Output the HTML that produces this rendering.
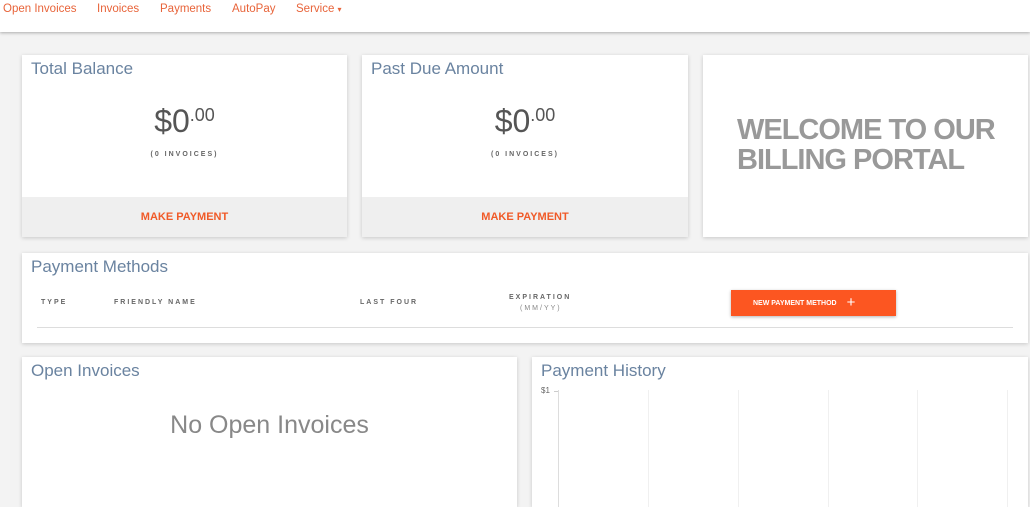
<!DOCTYPE html>
<html><head><style>
*{box-sizing:border-box;margin:0;padding:0}
body{width:1030px;height:497px;overflow:hidden;background:#f3f3f3;font-family:"Liberation Sans",sans-serif;position:relative}
.nav{position:absolute;left:0;top:0;width:1030px;height:32px;background:#fff;box-shadow:0 1px 3px rgba(0,0,0,.3)}
.nav span{position:absolute;top:3px;font-size:11.5px;color:#e8643a}
.card{position:absolute;background:#fff;box-shadow:0 1px 4px rgba(0,0,0,.18);overflow:hidden}
.title{position:absolute;left:9px;top:4px;font-size:17px;color:#6a83a0}
.amt{position:absolute;left:0;right:0;top:48px;text-align:center;font-size:32px;color:#555}
.amt sup{font-size:18px;vertical-align:top;position:relative;top:2px}
.inv{position:absolute;left:0;right:0;top:96px;text-align:center;font-size:7px;letter-spacing:2px;color:#666;font-weight:bold}
.foot{position:absolute;left:0;right:0;bottom:0;height:40px;background:#efefef;text-align:center;line-height:40px;font-size:11px;font-weight:bold;color:#f05a28}
.th{position:absolute;font-size:7px;letter-spacing:2px;color:#666;font-weight:bold}
</style></head><body>
<div class="nav">
<span style="left:3px">Open Invoices</span><span style="left:97px">Invoices</span><span style="left:160px">Payments</span><span style="left:232px">AutoPay</span><span style="left:296px">Service <small style="font-size:8px">▾</small></span>
</div>
<div class="card" style="left:22px;top:55px;width:325px;height:182px">
<div class="title">Total Balance</div>
<div class="amt">$0<sup>.00</sup></div>
<div class="inv">(0 INVOICES)</div>
<div class="foot">MAKE PAYMENT</div></div>
<div class="card" style="left:362px;top:55px;width:326px;height:182px">
<div class="title">Past Due Amount</div>
<div class="amt">$0<sup>.00</sup></div>
<div class="inv">(0 INVOICES)</div>
<div class="foot">MAKE PAYMENT</div></div>
<div class="card" style="left:703px;top:55px;width:325px;height:182px">
<div style="position:absolute;left:34px;top:60px;font-size:29px;font-weight:bold;color:#999;line-height:30px;letter-spacing:-1px">WELCOME TO OUR<br>BILLING PORTAL</div></div>
<div class="card" style="left:22px;top:253px;width:1006px;height:90px">
<div class="title">Payment Methods</div>
<div class="th" style="left:19px;top:46px">TYPE</div>
<div class="th" style="left:92px;top:46px">FRIENDLY NAME</div>
<div class="th" style="left:338px;top:46px">LAST FOUR</div>
<div class="th" style="left:487px;top:41px">EXPIRATION</div>
<div class="th" style="left:498px;top:52px;font-weight:normal;color:#888">(MM/YY)</div>
<div style="position:absolute;left:709px;top:37px;width:165px;height:26px;background:#fc5621;box-shadow:0 1px 3px rgba(0,0,0,.3);color:#fff;font-size:7px;font-weight:bold;line-height:26px;padding-left:22px">NEW PAYMENT METHOD <span style="font-size:15px;font-weight:normal;margin-left:8px;vertical-align:middle">+</span></div>
<div style="position:absolute;left:15px;right:15px;top:74px;height:1px;background:#ddd"></div>
</div>
<div class="card" style="left:22px;top:357px;width:495px;height:150px">
<div class="title">Open Invoices</div>
<div style="position:absolute;left:0;right:0;top:54px;text-align:center;font-size:25px;color:#888">No Open Invoices</div></div>
<div class="card" style="left:532px;top:357px;width:496px;height:150px">
<div class="title">Payment History</div>
<div style="position:absolute;left:9px;top:29px;font-size:8px;color:#666">$1</div>
<div style="position:absolute;left:22px;top:34px;width:4px;height:1px;background:#ccc"></div>
<div style="position:absolute;left:26px;top:33px;width:1px;height:120px;background:#ddd"></div>
<div style="position:absolute;left:116px;top:33px;width:1px;height:120px;background:#f0f0f0"></div>
<div style="position:absolute;left:206px;top:33px;width:1px;height:120px;background:#f0f0f0"></div>
<div style="position:absolute;left:296px;top:33px;width:1px;height:120px;background:#f0f0f0"></div>
<div style="position:absolute;left:385px;top:33px;width:1px;height:120px;background:#f0f0f0"></div>
<div style="position:absolute;left:475px;top:33px;width:1px;height:120px;background:#f0f0f0"></div>
</div>
</body></html>
